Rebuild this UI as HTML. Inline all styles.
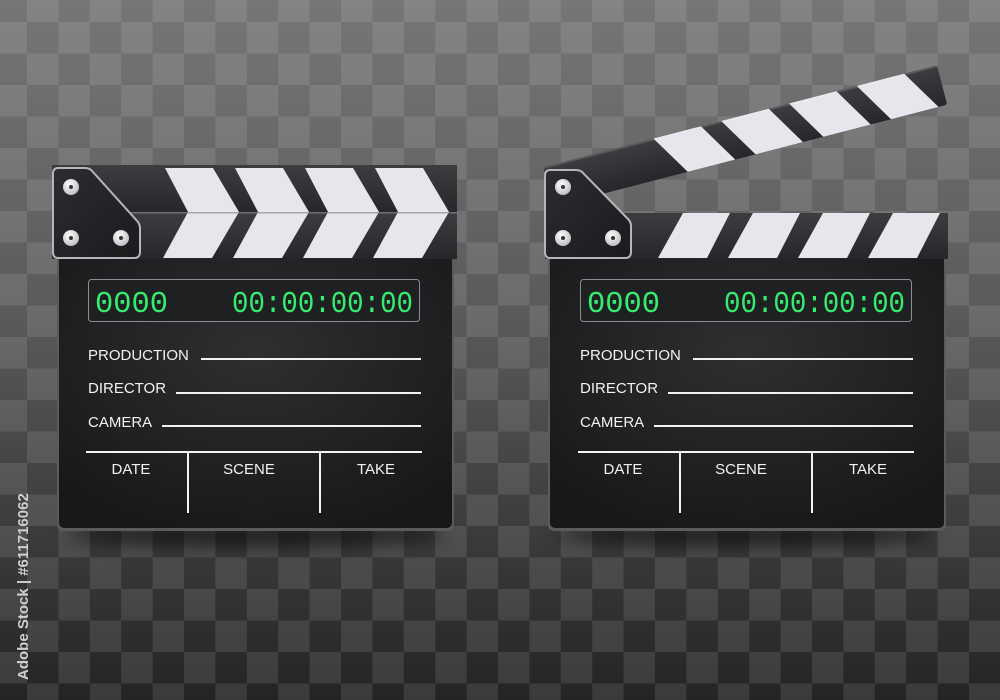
<!DOCTYPE html>
<html><head><meta charset="utf-8"><style>html,body{margin:0;padding:0;width:1000px;height:700px;overflow:hidden;background:#555}</style></head>
<body>
<svg width="1000" height="700" viewBox="0 0 1000 700" xmlns="http://www.w3.org/2000/svg" font-family="'Liberation Sans', sans-serif">
<defs>
<linearGradient id="bg" x1="0" y1="0" x2="0" y2="1">
<stop offset="0" stop-color="#767676"/><stop offset="0.45" stop-color="#5a5a5a"/><stop offset="1" stop-color="#242424"/>
</linearGradient>
<pattern id="chk" patternUnits="userSpaceOnUse" x="-4.4" y="-9.5" width="62.8" height="63">
<rect x="31.4" y="0" width="31.4" height="31.5" fill="#fff" fill-opacity="0.1"/>
<rect x="0" y="31.5" width="31.4" height="31.5" fill="#fff" fill-opacity="0.1"/>
</pattern>
<radialGradient id="body" cx="0.5" cy="0.35" r="0.7">
<stop offset="0" stop-color="#2e2f31"/><stop offset="1" stop-color="#17181a"/>
</radialGradient>
<linearGradient id="stick" x1="0" y1="0" x2="0" y2="1">
<stop offset="0" stop-color="#3c3d40"/><stop offset="1" stop-color="#26272a"/>
</linearGradient>
<linearGradient id="plate" x1="0" y1="0" x2="1" y2="1">
<stop offset="0" stop-color="#2c2d30"/><stop offset="1" stop-color="#1a1b1d"/>
</linearGradient>
<radialGradient id="screw" cx="0.4" cy="0.35" r="0.7">
<stop offset="0" stop-color="#ffffff"/><stop offset="1" stop-color="#b9bbbf"/>
</radialGradient>
<filter id="blur" x="-20%" y="-100%" width="140%" height="300%"><feGaussianBlur stdDeviation="8"/></filter>
<clipPath id="cl1"><rect x="52" y="165" width="405" height="95"/></clipPath>
<clipPath id="cl2"><rect x="545" y="213" width="403" height="46"/></clipPath>
<clipPath id="cl3"><rect x="0" y="0" width="407" height="41" rx="3"/></clipPath>
</defs>
<rect width="1000" height="700" fill="url(#bg)"/>
<rect width="1000" height="700" fill="url(#chk)"/>

<!-- watermark id -->
<text transform="translate(28,680) rotate(-90)" font-size="15" font-weight="bold" fill="#cfcfcf">Adobe Stock | #611716062</text>

<!-- ===== LEFT ===== -->
<ellipse cx="255" cy="535" rx="190" ry="12" fill="#000" opacity="0.55" filter="url(#blur)"/>
<rect x="57" y="255" width="397" height="276" rx="6" fill="#5a5b5e"/>
<rect x="59" y="255" width="393" height="273" rx="5" fill="url(#body)"/>
<g clip-path="url(#cl1)">
<rect x="52" y="165" width="405" height="48" fill="url(#stick)"/>
<rect x="52" y="213" width="405" height="46" fill="url(#stick)"/>
<g fill="#e5e7ec">
<polygon points="165,168 213,168 239,212 212,258 163,258 188,212"/>
<polygon points="235,168 283,168 309,212 282,258 233,258 258,212"/>
<polygon points="305,168 353,168 379,212 352,258 303,258 328,212"/>
<polygon points="375,168 423,168 449,212 422,258 373,258 398,212"/>
</g>
<rect x="52" y="212" width="405" height="1.5" fill="#8a8b8e" opacity="0.7"/>
</g>
<path d="M58,168 H85 Q90,168 93,172 L138,222 Q140,225 140,228 V252 Q140,258 134,258 H58 Q53,258 53,252 V174 Q53,168 58,168 Z" fill="url(#plate)" stroke="#b4b6ba" stroke-width="2"/>
<g><circle cx="71" cy="187" r="8" fill="url(#screw)"/><circle cx="71" cy="187" r="2" fill="#333"/>
<circle cx="71" cy="238" r="8" fill="url(#screw)"/><circle cx="71" cy="238" r="2" fill="#333"/>
<circle cx="121" cy="238" r="8" fill="url(#screw)"/><circle cx="121" cy="238" r="2" fill="#333"/></g>

<g id="face">
<rect x="88.5" y="279.5" width="331" height="42" rx="3" fill="#1f2022" stroke="#8c8d90" stroke-width="1"/>
<text x="95" y="312" font-family="'Liberation Mono', monospace" font-size="31" fill="#35ec6f" textLength="73" lengthAdjust="spacingAndGlyphs">0000</text>
<text x="232" y="312" font-family="'Liberation Mono', monospace" font-size="31" fill="#35ec6f" textLength="181" lengthAdjust="spacingAndGlyphs">00:00:00:00</text>
<g fill="#f2f2f2" font-size="15">
<text x="88" y="360">PRODUCTION</text>
<text x="88" y="393">DIRECTOR</text>
<text x="88" y="427">CAMERA</text>
<text x="131" y="474" text-anchor="middle">DATE</text>
<text x="249" y="474" text-anchor="middle">SCENE</text>
<text x="376" y="474" text-anchor="middle">TAKE</text>
</g>
<g stroke="#f2f2f2" stroke-width="2">
<line x1="201" y1="359" x2="421" y2="359"/>
<line x1="176" y1="393" x2="421" y2="393"/>
<line x1="162" y1="426" x2="421" y2="426"/>
<line x1="86" y1="452" x2="422" y2="452"/>
<line x1="188" y1="452" x2="188" y2="513"/>
<line x1="320" y1="452" x2="320" y2="513"/>
</g>
</g>

<!-- ===== RIGHT ===== -->
<ellipse cx="747" cy="535" rx="190" ry="12" fill="#000" opacity="0.55" filter="url(#blur)"/>
<rect x="548" y="255" width="398" height="276" rx="6" fill="#5a5b5e"/>
<rect x="550" y="255" width="394" height="273" rx="5" fill="url(#body)"/>
<g clip-path="url(#cl2)">
<rect x="545" y="213" width="403" height="46" fill="url(#stick)"/>
<g fill="#e5e7ec">
<polygon points="683,213 730,213 707,258 658,258"/>
<polygon points="753,213 800,213 777,258 728,258"/>
<polygon points="823,213 870,213 847,258 798,258"/>
<polygon points="893,213 940,213 917,258 868,258"/>
</g>
</g>
<!-- open top stick -->
<g transform="translate(543,167) rotate(-14.5)">
<g clip-path="url(#cl3)">
<rect x="0" y="0" width="407" height="41" fill="url(#stick)"/>
<g fill="#e5e7ec">
<polygon points="114,0 163,0 188,41 139,41"/>
<polygon points="184,0 233,0 258,41 209,41"/>
<polygon points="254,0 303,0 328,41 279,41"/>
<polygon points="324,0 373,0 398,41 349,41"/>
</g>
<rect x="0" y="0" width="407" height="2" fill="#fff" opacity="0.15"/>
</g>
</g>
<path d="M550,170 H576 Q581,170 584,174 L628,219 Q631,222 631,226 V252 Q631,258 625,258 H550 Q545,258 545,252 V176 Q545,170 550,170 Z" fill="url(#plate)" stroke="#b4b6ba" stroke-width="2"/>
<g><circle cx="563" cy="187" r="8" fill="url(#screw)"/><circle cx="563" cy="187" r="2" fill="#333"/>
<circle cx="563" cy="238" r="8" fill="url(#screw)"/><circle cx="563" cy="238" r="2" fill="#333"/>
<circle cx="613" cy="238" r="8" fill="url(#screw)"/><circle cx="613" cy="238" r="2" fill="#333"/></g>
<use href="#face" transform="translate(492,0)"/>
</svg>
</body></html>
